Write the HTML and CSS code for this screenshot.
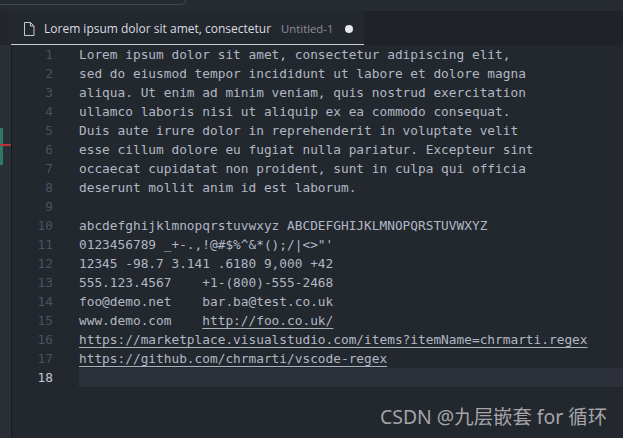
FILE: index.html
```html
<!DOCTYPE html>
<html lang="en">
<head>
  <meta charset="UTF-8">
  <meta name="viewport" content="width=device-width, initial-scale=1.0">
  <title>Lorem ipsum dolor sit amet, consectetur - Untitled-1</title>
  <link rel="stylesheet" href="styles.css">
</head>
<body>
  <div class="window">
    <div class="topbar">
      <div class="topbar-box"></div>
    </div>

    <div class="tabs">
      <div class="tabs-stub"></div>
      <div class="tab">
        <svg class="tab-icon" width="12" height="14" viewBox="0 0 12 14">
          <path d="M1.5 0.5 H7.5 L11 4 V13.5 H1.5 Z" fill="none" stroke="#c5c8ce" stroke-width="1"/>
          <path d="M7.5 0.5 V4 H11" fill="none" stroke="#c5c8ce" stroke-width="1"/>
        </svg>
        <span class="tab-title">Lorem ipsum dolor sit amet, consectetur</span>
        <span class="tab-desc">Untitled-1</span>
        <span class="tab-dirty"></span>
      </div>
    </div>

    <div class="editor">
      <div class="activity">
        <span class="mark-added"></span>
        <span class="mark-deleted"></span>
      </div>
      <div class="gutter">
        <div>1</div><div>2</div><div>3</div><div>4</div><div>5</div><div>6</div>
        <div>7</div><div>8</div><div>9</div><div>10</div><div>11</div><div>12</div>
        <div>13</div><div>14</div><div>15</div><div>16</div><div>17</div>
        <div class="current">18</div>
      </div>
      <div class="code">
        <div class="line">Lorem ipsum dolor sit amet, consectetur adipiscing elit,</div>
        <div class="line">sed do eiusmod tempor incididunt ut labore et dolore magna</div>
        <div class="line">aliqua. Ut enim ad minim veniam, quis nostrud exercitation</div>
        <div class="line">ullamco laboris nisi ut aliquip ex ea commodo consequat.</div>
        <div class="line">Duis aute irure dolor in reprehenderit in voluptate velit</div>
        <div class="line">esse cillum dolore eu fugiat nulla pariatur. Excepteur sint</div>
        <div class="line">occaecat cupidatat non proident, sunt in culpa qui officia</div>
        <div class="line">deserunt mollit anim id est laborum.</div>
        <div class="line"></div>
        <div class="line">abcdefghijklmnopqrstuvwxyz ABCDEFGHIJKLMNOPQRSTUVWXYZ</div>
        <div class="line">0123456789 _+-.,!@#$%^&amp;*();/|&lt;&gt;"'</div>
        <div class="line">12345 -98.7 3.141 .6180 9,000 +42</div>
        <div class="line">555.123.4567    +1-(800)-555-2468</div>
        <div class="line">foo@demo.net    bar.ba@test.co.uk</div>
        <div class="line">www.demo.com    <span class="link">http://foo.co.uk/</span></div>
        <div class="line"><span class="link">https://marketplace.visualstudio.com/items?itemName=chrmarti.regex</span></div>
        <div class="line"><span class="link">https://github.com/chrmarti/vscode-regex</span></div>
        <div class="line current-line"></div>
      </div>
    </div>

    <div class="watermark">CSDN @九层嵌套 for 循环</div>
  </div>
</body>
</html>
```

FILE: styles.css
```css
/* Global */
html, body {
  margin: 0;
  padding: 0;
  height: 100%;
  background: #23272e;
  overflow: hidden;
}

.window {
  position: relative;
  height: 438px;
  display: flex;
  flex-direction: column;
  background: #23272e;
  overflow: hidden;
}

/* Top strip */
.topbar {
  height: 11px;
  flex-shrink: 0;
  background: #262a31;
}

.topbar-box {
  width: 186px;
  height: 4px;
  border: 1px solid #444a54;
  border-top: none;
  border-radius: 0 0 5px 0;
  margin-left: -2px;
}

/* Tabs */
.tabs {
  height: 34px;
  flex-shrink: 0;
  display: flex;
  background: #1f2227;
}

.tabs-stub {
  width: 11px;
  background: #23262c;
}

.tab {
  width: 353px;
  display: flex;
  align-items: center;
  background: #23272e;
  border-bottom: 1px solid #c9ccd2;
  box-sizing: border-box;
  padding-left: 12px;
  padding-top: 2px;
}

.tab-icon {
  margin-right: 9px;
  margin-top: 1px;
}

.tab-title {
  font-family: "Open Sans", "Noto Sans", sans-serif;
  font-size: 12px;
  color: #d9dce1;
  white-space: nowrap;
}

.tab-desc {
  font-family: "Open Sans", "Noto Sans", sans-serif;
  font-size: 11.3px;
  color: #8c9099;
  margin-left: 10px;
  white-space: nowrap;
}

.tab-dirty {
  width: 8px;
  height: 8px;
  border-radius: 50%;
  background: #e6e8ec;
  margin-left: 12px;
}

/* Editor */
.editor {
  flex: 1;
  display: flex;
  min-height: 0;
  font-family: "DejaVu Sans Mono", "Liberation Mono", monospace;
  font-size: 12.8px;
  line-height: 19px;
}

.activity {
  width: 11px;
  flex-shrink: 0;
  background: #2a2e35;
  border-right: 1px solid #181a1f;
  position: relative;
}

.mark-added {
  position: absolute;
  left: 0;
  top: 83px;
  width: 3px;
  height: 37px;
  background: #2f7a63;
}

.mark-deleted {
  position: absolute;
  left: 0;
  top: 99px;
  width: 11px;
  height: 2px;
  background: #b8333b;
}

.gutter {
  width: 41px;
  flex-shrink: 0;
  text-align: right;
  color: #4b5262;
}

.gutter .current {
  color: #c3cad6;
}

.code {
  flex: 1;
  min-width: 0;
  margin-left: 26px;
  color: #b1b8c4;
}

.line {
  height: 19px;
  white-space: pre;
}

.current-line {
  background: #2c3039;
}

.link {
  text-decoration: underline;
  text-decoration-color: #aab1bd;
  text-underline-offset: 3px;
}

/* Watermark overlay */
.watermark {
  position: absolute;
  left: 380px;
  top: 401px;
  font-family: "Noto Sans", "Noto Sans CJK SC", sans-serif;
  font-size: 19.4px;
  color: #a3a5a8;
  white-space: nowrap;
}
```
